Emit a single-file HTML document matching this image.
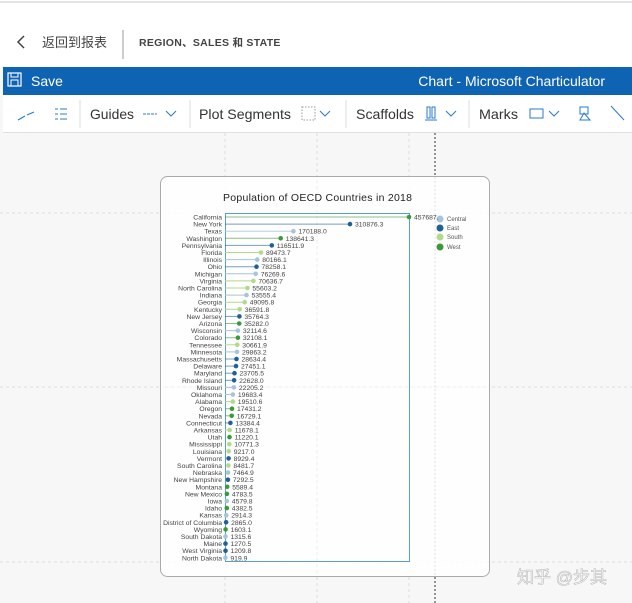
<!DOCTYPE html>
<html><head><meta charset="utf-8"><style>
html,body{margin:0;padding:0;width:632px;height:603px;overflow:hidden;background:#f7f7f7;font-family:"Liberation Sans","Noto Sans CJK SC",sans-serif}
</style></head><body>
<svg width="632" height="603" viewBox="0 0 632 603" xmlns="http://www.w3.org/2000/svg" style="position:absolute;left:0;top:0;font-family:'Liberation Sans','Noto Sans CJK SC',sans-serif">
<rect x="0" y="0" width="632" height="67" fill="#fff"/>
<line x1="0" y1="2" x2="632" y2="2" stroke="#c8c8c8"/>
<path d="M24 36 L18 42 L24 48" fill="none" stroke="#444" stroke-width="1.5"/>
<text x="42" y="47" font-size="13" fill="#444">返回到报表</text>
<line x1="123" y1="30" x2="123" y2="59" stroke="#999"/>
<text x="139" y="46" font-size="10.5" font-weight="bold" fill="#444" letter-spacing="0.6" textLength="142">REGION、SALES 和 STATE</text>
<rect x="3" y="67" width="629" height="28" fill="#0f63b3"/>
<rect x="8" y="73" width="13" height="13" fill="none" stroke="#fff" stroke-width="1.2"/>
<rect x="11" y="73" width="7" height="4" fill="none" stroke="#fff"/>
<rect x="11" y="80" width="7" height="6" fill="none" stroke="#fff"/>
<text x="31" y="86" font-size="14" fill="#fff">Save</text>
<text x="605" y="86" font-size="14" fill="#fff" text-anchor="end">Chart - Microsoft Charticulator</text>
<rect x="3" y="95" width="629" height="38" fill="#fff"/>
<line x1="3" y1="132.5" x2="632" y2="132.5" stroke="#e0e0e0"/>
<path d="M18 120 L25 116 M27 115 L34 112" stroke="#2a7ad0" stroke-width="1.2"/>
<g stroke="#2a7ad0" stroke-width="1"><line x1="55" y1="109" x2="58" y2="109"/><line x1="60" y1="109" x2="67" y2="109"/><line x1="55" y1="114" x2="58" y2="114"/><line x1="60" y1="114" x2="67" y2="114"/><line x1="55" y1="119" x2="58" y2="119"/><line x1="60" y1="119" x2="67" y2="119"/></g>
<g stroke="#ddd"><line x1="80" y1="100" x2="80" y2="128"/><line x1="190" y1="100" x2="190" y2="128"/><line x1="346" y1="100" x2="346" y2="128"/><line x1="469" y1="100" x2="469" y2="128"/></g>
<g font-size="14" fill="#333"><text x="90" y="119" textLength="44" lengthAdjust="spacingAndGlyphs">Guides</text><text x="199" y="119" textLength="92" lengthAdjust="spacingAndGlyphs">Plot Segments</text><text x="356" y="119" textLength="58" lengthAdjust="spacingAndGlyphs">Scaffolds</text><text x="479" y="119" textLength="39" lengthAdjust="spacingAndGlyphs">Marks</text></g>
<line x1="143" y1="114" x2="157" y2="114" stroke="#2a7ad0" stroke-dasharray="3 1"/>
<g fill="none" stroke="#2a7ad0" stroke-width="1"><path d="M166 111 L171 116 L176 111"/><path d="M268 111 L273 116 L278 111" transform="translate(52,0)"/><path d="M446 111 L451 116 L456 111"/><path d="M549 111 L554 116 L559 111"/>
<rect x="302" y="107" width="13" height="13" stroke-dasharray="1.5 1.5" stroke="#999"/>
<rect x="427" y="107" width="3" height="11"/><rect x="432" y="107" width="3" height="11"/><line x1="425" y1="120" x2="437" y2="120"/>
<rect x="530" y="109" width="13" height="9"/>
<rect x="580" y="107" width="8" height="7"/><path d="M584 113 L590 120 L580 120 Z"/>
<line x1="611" y1="106" x2="624" y2="120"/></g>
<g stroke="#ddd" stroke-dasharray="3 3"><line x1="225" y1="133" x2="225" y2="603"/><line x1="317" y1="133" x2="317" y2="603"/><line x1="409" y1="133" x2="409" y2="603"/><line x1="0" y1="213" x2="632" y2="213"/><line x1="0" y1="387" x2="632" y2="387"/><line x1="0" y1="562" x2="632" y2="562"/></g>
<line x1="435" y1="133" x2="435" y2="603" stroke="#333" stroke-dasharray="2 2"/>
<rect x="160.5" y="176.5" width="329" height="400" rx="7" fill="#fff" fill-opacity="0.85" stroke="#aaa"/>
<g stroke="#eee" stroke-dasharray="3 3"><line x1="317" y1="180" x2="317" y2="575"/><line x1="165" y1="387" x2="488" y2="387"/></g>
<text x="223" y="201" font-size="10.5" fill="#222" textLength="189">Population of OECD Countries in 2018</text>
<rect x="225.5" y="213.5" width="184" height="348" fill="none" stroke="#5a9fd4"/>
<g font-size="6" fill="#555">
<circle cx="440" cy="219" r="3.5" fill="#a6c4dc"/><text x="447" y="221">Central</text>
<circle cx="440" cy="228" r="3.5" fill="#1f5f9a"/><text x="447" y="230">East</text>
<circle cx="440" cy="237" r="3.5" fill="#b3d98a"/><text x="447" y="239">South</text>
<circle cx="440" cy="247" r="3.5" fill="#3a9a3a"/><text x="447" y="249">West</text>
</g>
<g font-size="6.8" fill="#444">
<g transform="translate(0,217)"><text x="222" y="2.5" text-anchor="end">California</text><line x1="225" x2="409" stroke="#3a9a3a" stroke-opacity=".6"/><circle cx="409" r="2.3" fill="#3a9a3a"/><text x="414" y="2.5">457687.</text></g>
<g transform="translate(0,224.1)"><text x="222" y="2.5" text-anchor="end">New York</text><line x1="225" x2="350" stroke="#1f5f9a" stroke-opacity=".6"/><circle cx="350" r="2.3" fill="#1f5f9a"/><text x="355" y="2.5">310876.3</text></g>
<g transform="translate(0,231.2)"><text x="222" y="2.5" text-anchor="end">Texas</text><line x1="225" x2="293.4" stroke="#a6c4dc" stroke-opacity=".8"/><circle cx="293.4" r="2.3" fill="#a6c4dc"/><text x="298.4" y="2.5">170188.0</text></g>
<g transform="translate(0,238.3)"><text x="222" y="2.5" text-anchor="end">Washington</text><line x1="225" x2="280.7" stroke="#3a9a3a" stroke-opacity=".6"/><circle cx="280.7" r="2.3" fill="#3a9a3a"/><text x="285.7" y="2.5">138641.3</text></g>
<g transform="translate(0,245.4)"><text x="222" y="2.5" text-anchor="end">Pennsylvania</text><line x1="225" x2="271.8" stroke="#1f5f9a" stroke-opacity=".6"/><circle cx="271.8" r="2.3" fill="#1f5f9a"/><text x="276.8" y="2.5">116511.9</text></g>
<g transform="translate(0,252.5)"><text x="222" y="2.5" text-anchor="end">Florida</text><line x1="225" x2="261" stroke="#b3d98a"/><circle cx="261" r="2.3" fill="#b3d98a"/><text x="266" y="2.5">89473.7</text></g>
<g transform="translate(0,259.6)"><text x="222" y="2.5" text-anchor="end">Illinois</text><line x1="225" x2="257.2" stroke="#a6c4dc"/><circle cx="257.2" r="2.3" fill="#a6c4dc"/><text x="262.2" y="2.5">80166.1</text></g>
<g transform="translate(0,266.7)"><text x="222" y="2.5" text-anchor="end">Ohio</text><line x1="225" x2="256.5" stroke="#1f5f9a" stroke-opacity=".6"/><circle cx="256.5" r="2.3" fill="#1f5f9a"/><text x="261.5" y="2.5">78258.1</text></g>
<g transform="translate(0,273.8)"><text x="222" y="2.5" text-anchor="end">Michigan</text><line x1="225" x2="255.7" stroke="#a6c4dc"/><circle cx="255.7" r="2.3" fill="#a6c4dc"/><text x="260.7" y="2.5">76269.6</text></g>
<g transform="translate(0,280.9)"><text x="222" y="2.5" text-anchor="end">Virginia</text><line x1="225" x2="253.4" stroke="#b3d98a"/><circle cx="253.4" r="2.3" fill="#b3d98a"/><text x="258.4" y="2.5">70636.7</text></g>
<g transform="translate(0,288)"><text x="222" y="2.5" text-anchor="end">North Carolina</text><line x1="225" x2="247.4" stroke="#b3d98a"/><circle cx="247.4" r="2.3" fill="#b3d98a"/><text x="252.4" y="2.5">55603.2</text></g>
<g transform="translate(0,295.1)"><text x="222" y="2.5" text-anchor="end">Indiana</text><line x1="225" x2="246.5" stroke="#a6c4dc"/><circle cx="246.5" r="2.3" fill="#a6c4dc"/><text x="251.5" y="2.5">53555.4</text></g>
<g transform="translate(0,302.2)"><text x="222" y="2.5" text-anchor="end">Georgia</text><line x1="225" x2="244.7" stroke="#b3d98a"/><circle cx="244.7" r="2.3" fill="#b3d98a"/><text x="249.7" y="2.5">49095.8</text></g>
<g transform="translate(0,309.3)"><text x="222" y="2.5" text-anchor="end">Kentucky</text><line x1="225" x2="239.7" stroke="#b3d98a"/><circle cx="239.7" r="2.3" fill="#b3d98a"/><text x="244.7" y="2.5">36591.8</text></g>
<g transform="translate(0,316.4)"><text x="222" y="2.5" text-anchor="end">New Jersey</text><line x1="225" x2="239.4" stroke="#1f5f9a" stroke-opacity=".6"/><circle cx="239.4" r="2.3" fill="#1f5f9a"/><text x="244.4" y="2.5">35764.3</text></g>
<g transform="translate(0,323.5)"><text x="222" y="2.5" text-anchor="end">Arizona</text><line x1="225" x2="239.2" stroke="#3a9a3a" stroke-opacity=".6"/><circle cx="239.2" r="2.3" fill="#3a9a3a"/><text x="244.2" y="2.5">35282.0</text></g>
<g transform="translate(0,330.6)"><text x="222" y="2.5" text-anchor="end">Wisconsin</text><line x1="225" x2="237.9" stroke="#a6c4dc"/><circle cx="237.9" r="2.3" fill="#a6c4dc"/><text x="242.9" y="2.5">32114.6</text></g>
<g transform="translate(0,337.7)"><text x="222" y="2.5" text-anchor="end">Colorado</text><line x1="225" x2="237.9" stroke="#3a9a3a" stroke-opacity=".6"/><circle cx="237.9" r="2.3" fill="#3a9a3a"/><text x="242.9" y="2.5">32108.1</text></g>
<g transform="translate(0,344.8)"><text x="222" y="2.5" text-anchor="end">Tennessee</text><line x1="225" x2="237.3" stroke="#b3d98a"/><circle cx="237.3" r="2.3" fill="#b3d98a"/><text x="242.3" y="2.5">30661.9</text></g>
<g transform="translate(0,351.9)"><text x="222" y="2.5" text-anchor="end">Minnesota</text><line x1="225" x2="237" stroke="#a6c4dc"/><circle cx="237" r="2.3" fill="#a6c4dc"/><text x="242" y="2.5">29863.2</text></g>
<g transform="translate(0,359)"><text x="222" y="2.5" text-anchor="end">Massachusetts</text><line x1="225" x2="236.5" stroke="#1f5f9a" stroke-opacity=".6"/><circle cx="236.5" r="2.3" fill="#1f5f9a"/><text x="241.5" y="2.5">28634.4</text></g>
<g transform="translate(0,366.1)"><text x="222" y="2.5" text-anchor="end">Delaware</text><line x1="225" x2="236" stroke="#1f5f9a" stroke-opacity=".6"/><circle cx="236" r="2.3" fill="#1f5f9a"/><text x="241" y="2.5">27451.1</text></g>
<g transform="translate(0,373.2)"><text x="222" y="2.5" text-anchor="end">Maryland</text><line x1="225" x2="234.5" stroke="#1f5f9a" stroke-opacity=".6"/><circle cx="234.5" r="2.3" fill="#1f5f9a"/><text x="239.5" y="2.5">23705.5</text></g>
<g transform="translate(0,380.3)"><text x="222" y="2.5" text-anchor="end">Rhode Island</text><line x1="225" x2="234.1" stroke="#1f5f9a" stroke-opacity=".6"/><circle cx="234.1" r="2.3" fill="#1f5f9a"/><text x="239.1" y="2.5">22628.0</text></g>
<g transform="translate(0,387.4)"><text x="222" y="2.5" text-anchor="end">Missouri</text><line x1="225" x2="233.9" stroke="#a6c4dc"/><circle cx="233.9" r="2.3" fill="#a6c4dc"/><text x="238.9" y="2.5">22205.2</text></g>
<g transform="translate(0,394.5)"><text x="222" y="2.5" text-anchor="end">Oklahoma</text><line x1="225" x2="232.9" stroke="#a6c4dc"/><circle cx="232.9" r="2.3" fill="#a6c4dc"/><text x="237.9" y="2.5">19683.4</text></g>
<g transform="translate(0,401.6)"><text x="222" y="2.5" text-anchor="end">Alabama</text><line x1="225" x2="232.8" stroke="#b3d98a"/><circle cx="232.8" r="2.3" fill="#b3d98a"/><text x="237.8" y="2.5">19510.6</text></g>
<g transform="translate(0,408.7)"><text x="222" y="2.5" text-anchor="end">Oregon</text><line x1="225" x2="232" stroke="#3a9a3a" stroke-opacity=".6"/><circle cx="232" r="2.3" fill="#3a9a3a"/><text x="237" y="2.5">17431.2</text></g>
<g transform="translate(0,415.8)"><text x="222" y="2.5" text-anchor="end">Nevada</text><line x1="225" x2="231.7" stroke="#3a9a3a" stroke-opacity=".6"/><circle cx="231.7" r="2.3" fill="#3a9a3a"/><text x="236.7" y="2.5">16729.1</text></g>
<g transform="translate(0,422.9)"><text x="222" y="2.5" text-anchor="end">Connecticut</text><line x1="225" x2="230.4" stroke="#1f5f9a" stroke-opacity=".6"/><circle cx="230.4" r="2.3" fill="#1f5f9a"/><text x="235.4" y="2.5">13384.4</text></g>
<g transform="translate(0,430)"><text x="222" y="2.5" text-anchor="end">Arkansas</text><line x1="225" x2="229.7" stroke="#b3d98a"/><circle cx="229.7" r="2.3" fill="#b3d98a"/><text x="234.7" y="2.5">11678.1</text></g>
<g transform="translate(0,437.1)"><text x="222" y="2.5" text-anchor="end">Utah</text><circle cx="229.5" r="2.3" fill="#3a9a3a"/><text x="234.5" y="2.5">11220.1</text></g>
<g transform="translate(0,444.2)"><text x="222" y="2.5" text-anchor="end">Mississippi</text><circle cx="229.3" r="2.3" fill="#b3d98a"/><text x="234.3" y="2.5">10771.3</text></g>
<g transform="translate(0,451.3)"><text x="222" y="2.5" text-anchor="end">Louisiana</text><circle cx="228.7" r="2.3" fill="#b3d98a"/><text x="233.7" y="2.5">9217.0</text></g>
<g transform="translate(0,458.4)"><text x="222" y="2.5" text-anchor="end">Vermont</text><circle cx="228.6" r="2.3" fill="#1f5f9a"/><text x="233.6" y="2.5">8929.4</text></g>
<g transform="translate(0,465.5)"><text x="222" y="2.5" text-anchor="end">South Carolina</text><circle cx="228.4" r="2.3" fill="#b3d98a"/><text x="233.4" y="2.5">8481.7</text></g>
<g transform="translate(0,472.6)"><text x="222" y="2.5" text-anchor="end">Nebraska</text><circle cx="228" r="2.3" fill="#a6c4dc"/><text x="233" y="2.5">7464.9</text></g>
<g transform="translate(0,479.7)"><text x="222" y="2.5" text-anchor="end">New Hampshire</text><circle cx="227.9" r="2.3" fill="#1f5f9a"/><text x="232.9" y="2.5">7292.5</text></g>
<g transform="translate(0,486.8)"><text x="222" y="2.5" text-anchor="end">Montana</text><circle cx="227.2" r="2.3" fill="#3a9a3a"/><text x="232.2" y="2.5">5589.4</text></g>
<g transform="translate(0,493.9)"><text x="222" y="2.5" text-anchor="end">New Mexico</text><circle cx="226.9" r="2.3" fill="#3a9a3a"/><text x="231.9" y="2.5">4783.5</text></g>
<g transform="translate(0,501)"><text x="222" y="2.5" text-anchor="end">Iowa</text><circle cx="226.8" r="2.3" fill="#a6c4dc"/><text x="231.8" y="2.5">4579.8</text></g>
<g transform="translate(0,508.1)"><text x="222" y="2.5" text-anchor="end">Idaho</text><circle cx="226.8" r="2.3" fill="#3a9a3a"/><text x="231.8" y="2.5">4382.5</text></g>
<g transform="translate(0,515.2)"><text x="222" y="2.5" text-anchor="end">Kansas</text><circle cx="226.2" r="2.3" fill="#a6c4dc"/><text x="231.2" y="2.5">2914.3</text></g>
<g transform="translate(0,522.3)"><text x="222" y="2.5" text-anchor="end">District of Columbia</text><circle cx="226.1" r="2.3" fill="#1f5f9a"/><text x="231.1" y="2.5">2865.0</text></g>
<g transform="translate(0,529.4)"><text x="222" y="2.5" text-anchor="end">Wyoming</text><circle cx="225.6" r="2.3" fill="#3a9a3a"/><text x="230.6" y="2.5">1603.1</text></g>
<g transform="translate(0,536.5)"><text x="222" y="2.5" text-anchor="end">South Dakota</text><circle cx="225.5" r="2.3" fill="#a6c4dc"/><text x="230.5" y="2.5">1315.6</text></g>
<g transform="translate(0,543.6)"><text x="222" y="2.5" text-anchor="end">Maine</text><circle cx="225.5" r="2.3" fill="#1f5f9a"/><text x="230.5" y="2.5">1270.5</text></g>
<g transform="translate(0,550.7)"><text x="222" y="2.5" text-anchor="end">West Virginia</text><circle cx="225.5" r="2.3" fill="#1f5f9a"/><text x="230.5" y="2.5">1209.8</text></g>
<g transform="translate(0,557.8)"><text x="222" y="2.5" text-anchor="end">North Dakota</text><circle cx="225.4" r="2.3" fill="#a6c4dc"/><text x="230.4" y="2.5">919.9</text></g>
</g>
<text x="517" y="583" font-size="17" fill="#fff" stroke="#bbb" stroke-width="0.6">知乎 @步其</text>
</svg>
</body></html>
